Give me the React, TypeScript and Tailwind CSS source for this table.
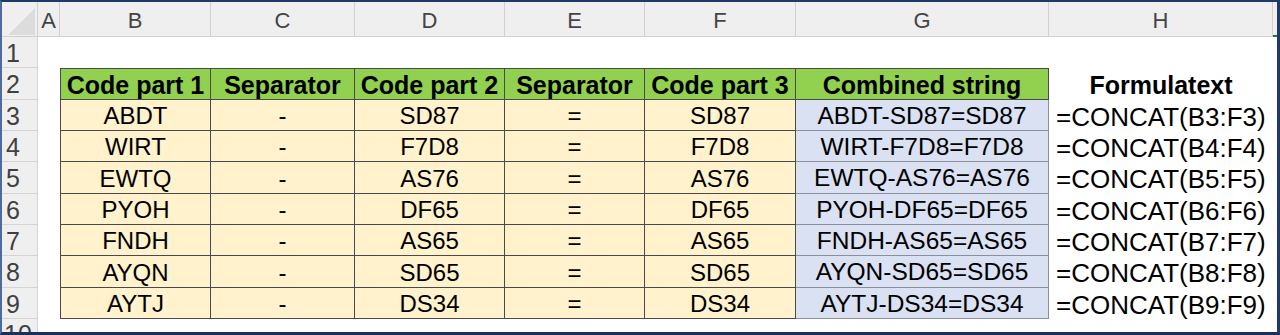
import React from "react";

const COLS = ["A", "B", "C", "D", "E", "F", "G", "H", ""];

const HEADERS = ["Code part 1", "Separator", "Code part 2", "Separator", "Code part 3", "Combined string"];

const DATA = [
  ["ABDT", "-", "SD87", "=", "SD87"],
  ["WIRT", "-", "F7D8", "=", "F7D8"],
  ["EWTQ", "-", "AS76", "=", "AS76"],
  ["PYOH", "-", "DF65", "=", "DF65"],
  ["FNDH", "-", "AS65", "=", "AS65"],
  ["AYQN", "-", "SD65", "=", "SD65"],
  ["AYTJ", "-", "DS34", "=", "DS34"],
];

function RowHead({ n }: { n: number }) {
  return (
    <div className="flex items-center overflow-hidden border-r border-b border-[#d4d4d4] bg-[#efefef] pl-[4px] pt-[2px] text-[25px] leading-none text-[#404040]">
      {n}
    </div>
  );
}

export default function App() {
  return (
    <div
      className="h-[335px] w-[1280px] overflow-hidden border-t-2 border-l-2 border-r-[3px] border-b-[3px] border-t-[#1f3a68] border-l-[#4d6b9e] border-r-[#1f3a68] border-b-[#17305c] bg-white"
      style={{ fontFamily: '"Liberation Sans", Arial, sans-serif' }}
    >
      <div className="grid grid-cols-[36px_22px_151px_144px_150px_140px_151px_253px_224px_4px] grid-rows-[35px_31px_32px_31px_31px_32px_31px_31px_32px_31px_13px]">
        {/* column headers */}
        <div className="relative border-r border-b border-[#d0d0d0] bg-[#efefef]">
          <svg className="absolute left-[6px] top-[6px]" width="27" height="27" viewBox="0 0 27 27">
            <polygon points="27,0 27,27 0,27" fill="#dcdcdc" />
          </svg>
        </div>
        {COLS.map((c, i) => (
          <div
            key={i}
            className={
              "flex items-center justify-center border-b border-[#d0d0d0] bg-[#efefef] pt-[3px] text-[22px] leading-none text-[#444] " +
              (i === COLS.length - 1 ? "border-b-2 border-b-[#217346]" : "border-r")
            }
          >
            {c}
          </div>
        ))}

        {/* row 1 */}
        <RowHead n={1} />
        {COLS.map((_, i) => (
          <div key={i} />
        ))}

        {/* row 2 */}
        <RowHead n={2} />
        <div />
        {HEADERS.map((h, i) => (
          <div
            key={h + i}
            className={
              "flex items-center justify-center whitespace-nowrap border-t border-r border-b border-[#4a4a4a] bg-[#92d050] pt-[2px] text-[25px] font-bold leading-none text-black " +
              (i === 0 ? "border-l" : "")
            }
          >
            {h}
          </div>
        ))}
        <div className="flex items-center justify-center pt-[2px] text-[25px] font-bold leading-none text-black">Formulatext</div>
        <div />

        {/* rows 3-9 */}
        {DATA.map((row, r) => (
          <React.Fragment key={r}>
            <RowHead n={r + 3} />
            <div />
            {row.map((v, i) => (
              <div
                key={i}
                className={
                  "flex items-center justify-center border-r border-b border-[#4a4a4a] bg-[#fff2cc] pt-[2px] text-[24px] leading-none text-black " +
                  (i === 0 ? "border-l" : "")
                }
              >
                {v}
              </div>
            ))}
            <div className="flex items-center justify-center border-r border-b border-[#8a8f99] bg-[#d9e1f2] pt-[2px] text-[24.5px] leading-none text-black">
              {row.join("")}
            </div>
            <div className="flex items-center whitespace-nowrap pl-[7px] pt-[2px] text-[26px] leading-none text-black">
              =CONCAT(B{r + 3}:F{r + 3})
            </div>
            <div />
          </React.Fragment>
        ))}

        {/* row 10, cut off by the frame */}
        <div className="overflow-hidden border-r border-[#d4d4d4] bg-[#efefef] pl-[2px] pt-[3px] text-[25px] leading-none text-[#404040]">
          10
        </div>
      </div>
    </div>
  );
}
